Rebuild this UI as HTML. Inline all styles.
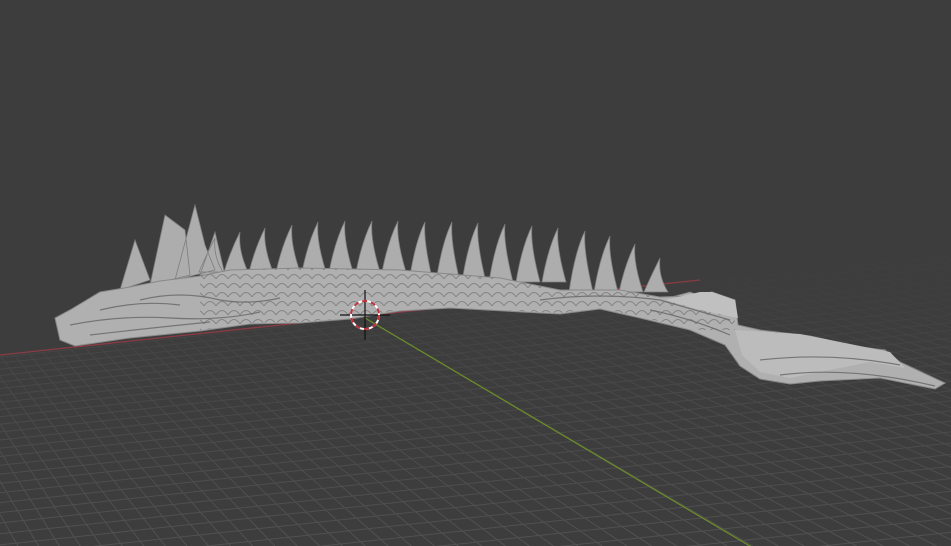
<!DOCTYPE html>
<html><head><meta charset="utf-8"><style>
html,body{margin:0;padding:0;background:#3d3d3d;overflow:hidden;width:951px;height:546px}
svg{display:block}
</style></head><body>
<svg id="s" width="951" height="546" viewBox="0 0 951 546" xmlns="http://www.w3.org/2000/svg">
<defs>
<linearGradient id="fade" gradientUnits="userSpaceOnUse" x1="0" y1="290" x2="0" y2="546">
<stop offset="0" stop-color="#fff" stop-opacity="0.1"/>
<stop offset="0.3" stop-color="#fff" stop-opacity="0.5"/>
<stop offset="1" stop-color="#fff" stop-opacity="1"/>
</linearGradient>
<mask id="m"><rect x="0" y="0" width="951" height="546" fill="url(#fade)"/></mask>
<pattern id="scales" width="12" height="9" patternUnits="userSpaceOnUse">
<path d="M0,9 Q6,0 12,9" fill="none" stroke="#848484" stroke-width="1"/>
</pattern>
</defs>
<rect width="951" height="546" fill="#3d3d3d"/>
<g id="grid" stroke="#525252" stroke-width="1" fill="none" mask="url(#m)"></g>
<line x1="0" y1="355" x2="700" y2="280" stroke="#8a3b44" stroke-width="1.3"/>
<line x1="365" y1="318" x2="760" y2="552" stroke="#6b8a2a" stroke-width="1.3"/>
<g id="dragon">
<path id="sp" fill="#adadad" stroke="#7e7e7e" stroke-width="0.8" d=""/>
<path id="body" fill="#b0b0b0" stroke="#888" stroke-width="1" d="M55,318 L60,340 L75,346 L130,338 L200,331 L250,324 L300,323 L350,319 L400,311 L450,308 L540,313 L560,314 L600,309 L640,318 L690,330 L725,345 L740,366 L760,379 L790,384 L820,381 L880,378 L935,389 L945,383 L900,362 L885,350 L860,347 L810,336 L760,330 L738,325 L735,300 L712,292 L690,296 L660,297 L620,290 L560,290 L500,278 L400,270 L300,268 L230,270 L200,276 L160,281 L130,287 L100,292 L70,310 Z"/>
<path fill="url(#scales)" d="M200,330 L250,323 L300,322 L350,318 L400,310 L450,307 L540,312 L560,313 L600,308 L640,317 L700,330 L735,330 L735,300 L712,292 L690,296 L660,297 L620,290 L560,290 L500,278 L400,270 L300,268 L230,270 L200,276 Z"/>
<path fill="#bcbcbc" d="M735,330 L800,334 L860,346 L890,352 L905,368 L870,362 L820,372 L790,378 L760,372 L742,355 Z"/>
<path fill="#c0c0c0" d="M665,300 L700,292 L712,292 L735,300 L738,318 L700,310 Z"/>
<g stroke="#6e6e6e" stroke-width="1.2" fill="none" opacity="0.9">
<path d="M70,325 Q120,315 170,318 T260,312"/>
<path d="M90,335 Q150,328 210,322"/>
<path d="M140,300 Q180,290 220,300 Q250,305 280,298"/>
<path d="M100,310 Q140,300 180,305"/>
<path d="M540,300 Q600,292 660,300 L730,320"/>
<path d="M650,310 Q690,318 730,335"/>
<path d="M760,360 Q830,352 900,365"/>
<path d="M780,375 Q850,366 935,386"/>
</g>
</g>
<g>
<line x1="365" y1="290" x2="365" y2="340" stroke="#111" stroke-width="1.2"/>
<line x1="340" y1="315" x2="390" y2="315" stroke="#111" stroke-width="1.2"/>
<circle cx="365" cy="315" r="14" fill="none" stroke="#fff" stroke-width="2"/>
<circle cx="365" cy="315" r="14" fill="none" stroke="#c0303a" stroke-width="2" stroke-dasharray="5 4"/>
</g>
</svg>
<script>
(function(){
var g=document.getElementById('grid'),ns='http://www.w3.org/2000/svg';
function P(u,v){var w=1-0.012*v;return [365+(14*u+8.5*v)/w,318+(-1.5*u+5*v)/w];}
function L(a,b){var l=document.createElementNS(ns,'line');l.setAttribute('x1',a[0].toFixed(1));l.setAttribute('y1',a[1].toFixed(1));l.setAttribute('x2',b[0].toFixed(1));l.setAttribute('y2',b[1].toFixed(1));g.appendChild(l);}
for(var v=0;v<=45;v++){L(P(-70,v),P(90,v));}
for(var u=-70;u<=90;u++){L(P(u,0),P(u,45));}
var d='';
var tips=[[215,238],[240,232],[265,228],[292,225],[318,222],[345,221],[372,221],[398,221],[425,222],[452,222],[478,223],[505,224],[532,226],[558,228],[585,231],[610,236],[635,244],[660,258]];
tips.forEach(function(t){var x=t[0],y=t[1];var b=x<400?272:(x<560?282:292);
d+='M'+(x-16)+','+b+' Q'+(x-10)+','+(y+20)+' '+x+','+y+' Q'+(x-2)+','+(y+18)+' '+(x+8)+','+b+' Z ';});
d+='M120,290 L135,240 L150,280 Z M150,285 L165,215 L185,230 L190,275 Z M175,280 L195,205 L205,245 L215,270 Z M200,275 L215,232 L225,275 Z M660,300 L690,292 L712,300 L705,310 Z';
document.getElementById('sp').setAttribute('d',d);
})();
</script>
</body></html>
